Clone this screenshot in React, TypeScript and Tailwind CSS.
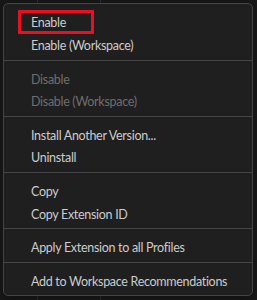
import React from "react";

type Entry = { label: string; disabled?: boolean } | "sep";

const entries: Entry[] = [
  { label: "Enable" },
  { label: "Enable (Workspace)" },
  "sep",
  { label: "Disable", disabled: true },
  { label: "Disable (Workspace)", disabled: true },
  "sep",
  { label: "Install Another Version..." },
  { label: "Uninstall" },
  "sep",
  { label: "Copy" },
  { label: "Copy Extension ID" },
  "sep",
  { label: "Apply Extension to all Profiles" },
  "sep",
  { label: "Add to Workspace Recommendations" },
];

export default function App() {
  return (
    <div
      className="relative w-[257px] h-[300px] overflow-hidden bg-[#181818]"
      style={{ fontFamily: 'Lato, "Noto Sans", sans-serif' }}
    >
      {/* editor chrome behind the menu */}
      <div className="absolute left-[37px] top-0 h-full w-px bg-[#2b2b2b]" />
      <div className="absolute left-[100px] top-0 h-full w-px bg-[#2b2b2b]" />

      <div className="absolute left-[3px] top-[3px] w-[250px] h-[293px] rounded-[5px] border border-[#454545] bg-[#1f1f1f] pt-[6.4px] shadow-[0_2px_8px_rgba(0,0,0,0.36)]">
        {entries.map((e, i) =>
          e === "sep" ? (
            <div key={i} className="mt-[4px] mb-[6px] h-px bg-[#454545]" />
          ) : (
            <div
              key={i}
              className={`flex h-[22.6px] items-center whitespace-nowrap pl-[27px] pt-[4px] text-[12.5px] tracking-[-0.3px] leading-none ${
                e.disabled ? "text-[#6e6e6e]" : "text-[#cccccc]"
              }`}
            >
              {e.label}
            </div>
          )
        )}
      </div>

      {/* annotation highlight */}
      <div className="absolute left-[18px] top-[10px] w-[76px] h-[24px] border-[3px] border-[#e81123]" />
    </div>
  );
}
